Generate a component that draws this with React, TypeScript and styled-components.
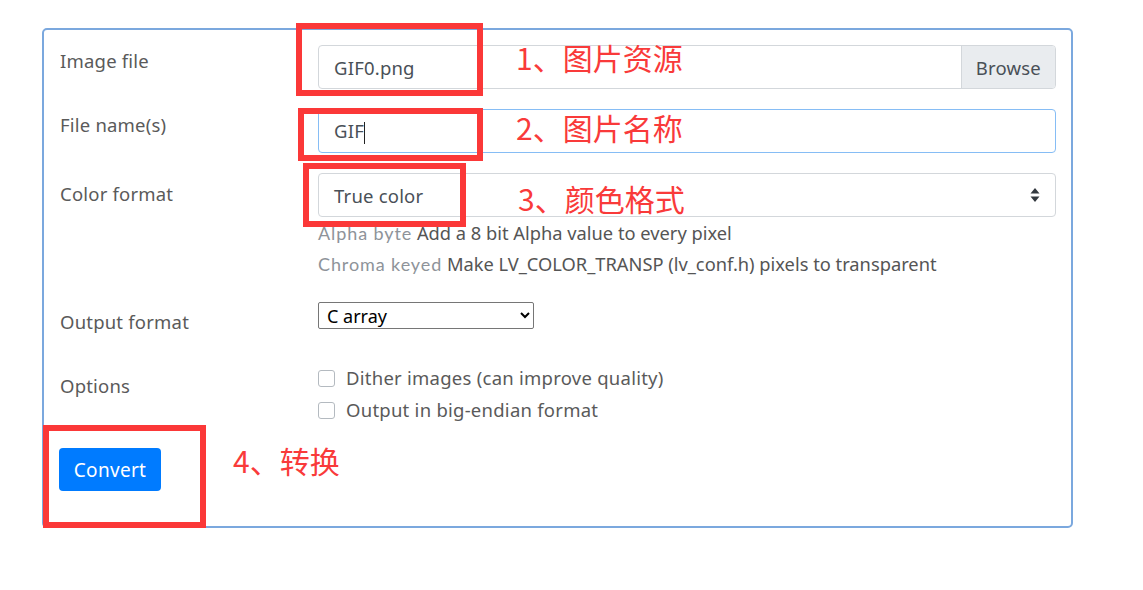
import React from 'react';
import styled, { createGlobalStyle } from 'styled-components';

const GlobalStyle = createGlobalStyle`
  html, body {
    margin: 0;
    padding: 0;
    background: #fff;
  }
  body {
    font-family: 'Noto Sans', 'Open Sans', sans-serif;
    color: #555;
  }
`;

const Page = styled.div`
  position: relative;
  width: 1143px;
  height: 590px;
  padding: 28px 0 0 42px;
  box-sizing: border-box;
`;

const Card = styled.form`
  width: 1031px;
  box-sizing: border-box;
  border: 2px solid #7ba8de;
  border-radius: 5px;
  padding: 15px 15px 35px 16px;
  display: flex;
  flex-direction: column;
`;

const Row = styled.div<{ $mt?: number }>`
  display: grid;
  grid-template-columns: 258px 1fr;
  align-items: start;
  margin-top: ${(p) => p.$mt ?? 0}px;
`;

const Label = styled.label<{ $pt?: number }>`
  font-size: 18.5px;
  line-height: 26px;
  letter-spacing: 0.2px;
  color: #5a5a5a;
  padding-top: ${(p) => p.$pt ?? 0}px;
`;

const Field = styled.div<{ $focus?: boolean }>`
  height: 44px;
  box-sizing: border-box;
  border: 1px solid ${(p) => (p.$focus ? '#86bdf5' : '#d3d7db')};
  border-radius: 4px;
  display: flex;
  align-items: center;
  font-size: 18.5px;
  letter-spacing: 0.2px;
  color: #495057;
  overflow: hidden;
`;

const FieldText = styled.span`
  flex: 1;
  padding-left: 15px;
`;

const Caret = styled.span`
  display: inline-block;
  width: 1px;
  height: 22px;
  background: #222;
  vertical-align: middle;
`;

const BrowseBtn = styled.span`
  height: 100%;
  display: flex;
  align-items: center;
  padding: 0 14px;
  background: #e9ecef;
  border-left: 1px solid #d3d7db;
  color: #495057;
`;

const SelectArrows = styled.svg`
  margin-right: 15px;
`;

const Help = styled.div`
  height: 31px;
  font-size: 18.3px;
  line-height: 31px;
  color: #555;
  white-space: nowrap;
`;

const HelpKey = styled.span`
  font-family: 'Lato', 'Open Sans', sans-serif;
  font-size: 18px;
  line-height: 1;
  color: #8e9399;
  letter-spacing: 0.9px;
`;

const NativeSelect = styled.select`
  display: block;
  width: 216px;
  height: 27px;
  border: 1px solid #767676;
  border-radius: 2px;
  background: #fff;
  font-family: 'Noto Sans', sans-serif;
  font-size: 18px;
  color: #000;
  padding: 0 4px;
`;

const Checks = styled.div`
  display: flex;
  flex-direction: column;
`;

const CheckLine = styled.label`
  display: flex;
  align-items: center;
  gap: 11px;
  font-size: 18.5px;
  letter-spacing: 0.25px;
  line-height: 32px;
  color: #5a5a5a;
`;

const Box = styled.span`
  width: 17px;
  height: 17px;
  box-sizing: border-box;
  border: 1px solid #b4bac0;
  border-radius: 3px;
  background: #fff;
`;

const Button = styled.button`
  display: block;
  width: 102px;
  height: 43px;
  margin-left: -1px;
  border: none;
  border-radius: 4px;
  background: #007bff;
  color: #fff;
  font-family: 'Noto Sans', sans-serif;
  font-size: 19px;
  letter-spacing: 0.3px;
`;

const Mark = styled.div<{ $x: number; $y: number; $w: number; $h: number }>`
  position: absolute;
  left: ${(p) => p.$x}px;
  top: ${(p) => p.$y}px;
  width: ${(p) => p.$w}px;
  height: ${(p) => p.$h}px;
  box-sizing: border-box;
  border: 6px solid #fb3838;
  pointer-events: none;
`;

const Note = styled.div<{ $x: number; $y: number }>`
  position: absolute;
  left: ${(p) => p.$x}px;
  top: ${(p) => p.$y}px;
  font-family: 'Noto Sans CJK SC', 'Noto Sans', sans-serif;
  font-size: 30px;
  line-height: 34px;
  color: #f93a3a;
  white-space: nowrap;
`;

const marks = [
  { x: 296, y: 23, w: 187, h: 73 },
  { x: 298, y: 108, w: 185, h: 53 },
  { x: 303, y: 163, w: 163, h: 64 },
  { x: 43, y: 425, w: 163, h: 103 },
];

const notes = [
  { x: 516, y: 40, text: '1、图片资源' },
  { x: 516, y: 110, text: '2、图片名称' },
  { x: 518, y: 181, text: '3、颜色格式' },
  { x: 233, y: 443, text: '4、转换' },
];

export default function App() {
  return (
    <Page>
      <GlobalStyle />
      <Card onSubmit={(e) => e.preventDefault()}>
        <Row>
          <Label $pt={3}>Image file</Label>
          <Field>
            <FieldText>GIF0.png</FieldText>
            <BrowseBtn>Browse</BrowseBtn>
          </Field>
        </Row>
        <Row $mt={20}>
          <Label $pt={3}>File name(s)</Label>
          <Field $focus>
            <FieldText>
              GIF<Caret />
            </FieldText>
          </Field>
        </Row>
        <Row $mt={20}>
          <Label $pt={8}>Color format</Label>
          <div>
            <Field>
              <FieldText>True color</FieldText>
              <SelectArrows width="10" height="16" viewBox="0 0 10 16">
                <path d="M5 1 L9.5 6.5 H0.5 Z M5 15 L0.5 9.5 H9.5 Z" fill="#343a40" />
              </SelectArrows>
            </Field>
            <Help>
              <HelpKey>Alpha byte</HelpKey> Add a 8 bit Alpha value to every pixel
            </Help>
            <Help>
              <HelpKey>Chroma keyed</HelpKey> Make LV_COLOR_TRANSP (lv_conf.h) pixels to transparent
            </Help>
          </div>
        </Row>
        <Row $mt={23}>
          <Label $pt={7}>Output format</Label>
          <div>
            <NativeSelect defaultValue="c">
              <option value="c">C array</option>
              <option value="bin">Binary</option>
            </NativeSelect>
          </div>
        </Row>
        <Row $mt={27}>
          <Label $pt={11}>Options</Label>
          <Checks>
            <CheckLine>
              <Box />
              Dither images (can improve quality)
            </CheckLine>
            <CheckLine>
              <Box />
              Output in big-endian format
            </CheckLine>
          </Checks>
        </Row>
        <Row $mt={22}>
          <div>
            <Button type="submit">Convert</Button>
          </div>
        </Row>
      </Card>
      {marks.map((m, i) => (
        <Mark key={i} $x={m.x} $y={m.y} $w={m.w} $h={m.h} />
      ))}
      {notes.map((n, i) => (
        <Note key={i} $x={n.x} $y={n.y}>
          {n.text}
        </Note>
      ))}
    </Page>
  );
}
